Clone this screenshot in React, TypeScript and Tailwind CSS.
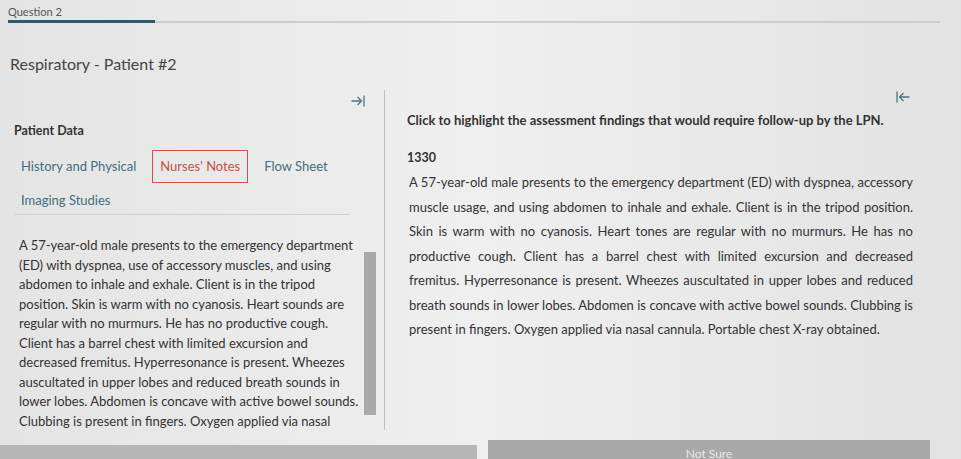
import React from "react";

const leftText =
  "A 57-year-old male presents to the emergency department (ED) with dyspnea, use of accessory muscles, and using abdomen to inhale and exhale. Client is in the tripod position. Skin is warm with no cyanosis. Heart sounds are regular with no murmurs. He has no productive cough. Client has a barrel chest with limited excursion and decreased fremitus. Hyperresonance is present. Wheezes auscultated in upper lobes and reduced breath sounds in lower lobes. Abdomen is concave with active bowel sounds. Clubbing is present in fingers. Oxygen applied via nasal cannula. Portable chest X-ray obtained.";

const rightText =
  "A 57-year-old male presents to the emergency department (ED) with dyspnea, accessory muscle usage, and using abdomen to inhale and exhale. Client is in the tripod position. Skin is warm with no cyanosis. Heart tones are regular with no murmurs. He has no productive cough. Client has a barrel chest with limited excursion and decreased fremitus. Hyperresonance is present. Wheezes auscultated in upper lobes and reduced breath sounds in lower lobes. Abdomen is concave with active bowel sounds. Clubbing is present in fingers. Oxygen applied via nasal cannula. Portable chest X-ray obtained.";

const CollapseRight = () => (
  <svg width="16" height="16" viewBox="0 0 16 16" fill="none" stroke="#4d7487" strokeWidth="1.3">
    <path d="M1.5 8h10M7.5 4l4 4-4 4M14 2.5v11" />
  </svg>
);

const CollapseLeft = () => (
  <svg width="16" height="16" viewBox="0 0 16 16" fill="none" stroke="#4d7487" strokeWidth="1.3">
    <path d="M14.5 8h-10M8.5 4l-4 4 4 4M2 2.5v11" />
  </svg>
);

export default function App() {
  return (
    <div
      className="w-[961px] h-[459px] overflow-hidden flex flex-col bg-gradient-to-r from-[#e4e4e4] via-[#efefef] to-[#e2e2e2] text-[#3a3a3a]"
      style={{ fontFamily: "Lato, 'Noto Sans', sans-serif" }}
    >
      {/* header */}
      <div className="pl-[8px] pr-[21px] pt-[5px]">
        <div className="text-[11px] leading-[14px] text-[#555]">Question 2</div>
        <div className="flex items-center mt-[1px]">
          <div className="w-[147px] h-[3px] bg-[#2d5a6c]" />
          <div className="flex-1 h-[2px] bg-[#cdcdcd]" />
        </div>
      </div>

      <div className="pl-[10px] mt-[30px] text-[16px] leading-[22px] text-[#444]">
        Respiratory - Patient #2
      </div>

      {/* main */}
      <div className="flex mt-[13px] flex-1 min-h-0">
        {/* left panel */}
        <div className="w-[384px] shrink-0 pl-[14px] flex flex-col">
          <div className="flex justify-end pr-[18px] pt-[5px] h-[27px]">
            <CollapseRight />
          </div>
          <div className="text-[12.5px] font-bold leading-[16px] mt-[8px] text-[#333]">Patient Data</div>
          <div className="flex items-center gap-[16px] pl-[7px] mt-[11px] text-[13px] text-[#3f6f80]">
            <span>History and Physical</span>
            <span className="border border-[#d0533f] text-[#c9503f] px-[7px] h-[33px] flex items-center">
              Nurses' Notes
            </span>
            <span>Flow Sheet</span>
          </div>
          <div className="pl-[7px] mt-[8px] text-[13px] leading-[18px] text-[#3f6f80]">Imaging Studies</div>
          <div className="h-px bg-[#cfcfcf] mt-[5px] mr-[34px]" />
          <div className="flex mt-[21px] h-[196px]">
            <div className="w-[350px] pl-[5px] overflow-hidden text-[13px] leading-[19.5px] text-[#333]">
              {leftText}
            </div>
            <div className="w-[12px] h-[163px] mt-[16px] bg-[#a9a9a9]" />
          </div>
        </div>

        {/* divider */}
        <div className="w-px bg-[#bdbdbd] mt-[2px] mb-[10px]" />

        {/* right panel */}
        <div className="flex-1 pl-[22px] pr-[48px] flex flex-col">
          <div className="flex justify-end pt-[1px] pr-[2px] h-[24px]">
            <CollapseLeft />
          </div>
          <div className="text-[13px] font-bold leading-[16px] text-[#333]">
            Click to highlight the assessment findings that would require follow-up by the LPN.
          </div>
          <div className="text-[12.5px] font-bold leading-[16px] mt-[22px] text-[#333]">1330</div>
          <div className="text-[13px] leading-[24.5px] mt-[4px] pl-[2px] text-justify text-[#333]">
            {rightText}
          </div>
        </div>
      </div>

      {/* bottom buttons */}
      <div className="flex gap-[11px] h-[19px] items-end pr-[31px]">
        <div className="w-[477px] h-[14px] bg-[#b6b6b6]" />
        <div className="flex-1 h-[19px] bg-[#a9a9a9] flex justify-center pt-[7px] text-[12px] text-[#e8e8e8] leading-[14px]">
          Not Sure
        </div>
      </div>
    </div>
  );
}
